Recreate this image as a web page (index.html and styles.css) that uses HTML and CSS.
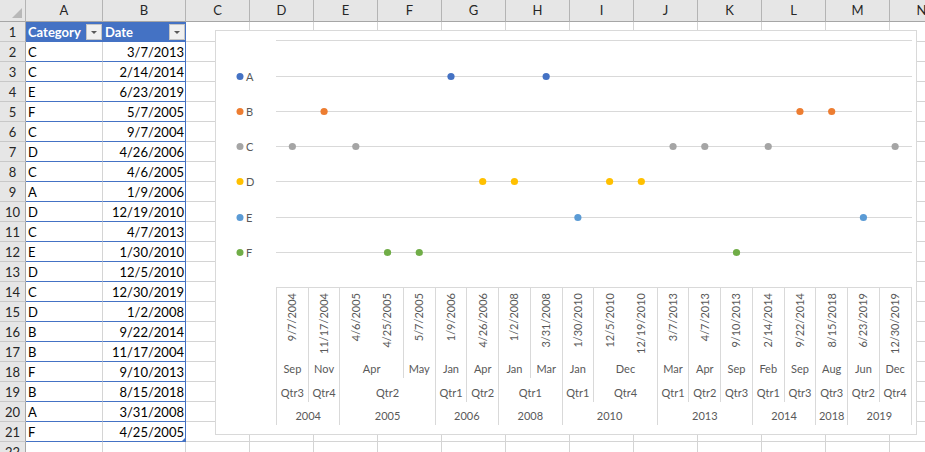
FILE: index.html
```html
<!DOCTYPE html>
<html lang="en">
<head>
    <meta charset="UTF-8">
    <meta name="viewport" content="width=device-width, initial-scale=1.0">
    <title>Timeline by Category</title>
    <link rel="stylesheet" href="styles.css">
</head>
<body>
    <div class="sheet">
        <div class="colheads">
            <div class="corner"><span class="tri"></span></div>
            <div class="col-a">A</div>
            <div class="col-b">B</div>
            <div>C</div>
            <div>D</div>
            <div>E</div>
            <div>F</div>
            <div>G</div>
            <div>H</div>
            <div>I</div>
            <div>J</div>
            <div>K</div>
            <div>L</div>
            <div>M</div>
            <div>N</div>
        </div>
        <div class="body">
            <div class="rowheads">
                <div>1</div><div>2</div><div>3</div><div>4</div><div>5</div><div>6</div>
                <div>7</div><div>8</div><div>9</div><div>10</div><div>11</div><div>12</div>
                <div>13</div><div>14</div><div>15</div><div>16</div><div>17</div><div>18</div>
                <div>19</div><div>20</div><div>21</div><div>22</div>
            </div>
            <div class="tbl">
                <div class="th">Category<span class="filter"></span></div>
                <div class="th">Date<span class="filter"></span></div>
                <div class="cat">C</div><div class="date">3/7/2013</div>
                <div class="cat">C</div><div class="date">2/14/2014</div>
                <div class="cat">E</div><div class="date">6/23/2019</div>
                <div class="cat">F</div><div class="date">5/7/2005</div>
                <div class="cat">C</div><div class="date">9/7/2004</div>
                <div class="cat">D</div><div class="date">4/26/2006</div>
                <div class="cat">C</div><div class="date">4/6/2005</div>
                <div class="cat">A</div><div class="date">1/9/2006</div>
                <div class="cat">D</div><div class="date">12/19/2010</div>
                <div class="cat">C</div><div class="date">4/7/2013</div>
                <div class="cat">E</div><div class="date">1/30/2010</div>
                <div class="cat">D</div><div class="date">12/5/2010</div>
                <div class="cat">C</div><div class="date">12/30/2019</div>
                <div class="cat">D</div><div class="date">1/2/2008</div>
                <div class="cat">B</div><div class="date">9/22/2014</div>
                <div class="cat">B</div><div class="date">11/17/2004</div>
                <div class="cat">F</div><div class="date">9/10/2013</div>
                <div class="cat">B</div><div class="date">8/15/2018</div>
                <div class="cat">A</div><div class="date">3/31/2008</div>
                <div class="cat">F</div><div class="date last">4/25/2005</div>
                <div class="blank"></div><div class="blank"></div>
            </div>
            <div class="empty"></div>
        </div>
        <div class="chart" id="chart"></div>
    </div>
    <script>
        const colors = { A: '#4472c4', B: '#ed7d31', C: '#a5a5a5', D: '#ffc000', E: '#5b9bd5', F: '#70ad47' };
        const monthNames = ['Jan', 'Feb', 'Mar', 'Apr', 'May', 'Jun', 'Jul', 'Aug', 'Sep', 'Oct', 'Nov', 'Dec'];
        const cats = ['A', 'B', 'C', 'D', 'E', 'F'];

        const catCells = document.querySelectorAll('.tbl .cat');
        const dateCells = document.querySelectorAll('.tbl .date');
        let points = [];
        catCells.forEach((cell, i) =>
        {
            const text = dateCells[i].textContent;
            const [m, d, y] = text.split('/').map(Number);
            points.push({ cat: cell.textContent, text, m, d, y, q: Math.ceil(m / 3) });
        });
        points.sort((a, b) => (a.y - b.y) || (a.m - b.m) || (a.d - b.d));

        // plot geometry, in chart pixels
        const left = 60.5, step = 31.725, axisY = 256;
        const cx = i => left + step * (i + 0.5);
        const rowY = k => Math.round(9.3 + 35.286 * k) + 0.5;
        const depthY = [0, 347, 371, 394];

        function depth(a, b)
        {
            if (!a || !b || a.y !== b.y) return 3;
            if (a.q !== b.q) return 2;
            if (a.m !== b.m) return 1;
            return 0;
        }

        function groups(keyOf)
        {
            const res = [];
            points.forEach((p, i) =>
            {
                const last = res[res.length - 1];
                if (last && last.key === keyOf(p)) last.end = i;
                else res.push({ key: keyOf(p), start: i, end: i, p });
            });
            return res;
        }

        let out = '';
        for (let k = 0; k <= 7; k++)
        {
            out += `<line class="grid" x1="60" x2="696" y1="${rowY(k)}" y2="${rowY(k)}"/>`;
        }

        for (let b = 0; b <= points.length; b++)
        {
            const dp = depth(points[b - 1], points[b]);
            if (!dp) continue;
            const x = Math.floor(276.5 + step * b) - 216 + 0.5;
            out += `<line class="grid" x1="${x}" x2="${x}" y1="${axisY}" y2="${depthY[dp]}"/>`;
        }

        cats.forEach((c, k) =>
        {
            const y = rowY(k + 1);
            out += `<circle cx="24" cy="${y}" r="3.5" fill="${colors[c]}"/>`;
            out += `<text x="30" y="${y + 4}">${c}</text>`;
        });

        points.forEach((p, i) =>
        {
            const y = rowY(cats.indexOf(p.cat) + 1);
            out += `<circle cx="${cx(i)}" cy="${y}" r="3.6" fill="${colors[p.cat]}"/>`;
            out += `<text text-anchor="end" transform="translate(${cx(i) + 3.9} 262) rotate(-90)">${p.text}</text>`;
        });

        const levels = [
            { key: p => p.y * 100 + p.m, label: p => monthNames[p.m - 1], y: 342 },
            { key: p => p.y * 10 + p.q, label: p => 'Qtr' + p.q, y: 365.5 },
            { key: p => p.y, label: p => p.y, y: 388.5 }
        ];
        levels.forEach(level =>
        {
            groups(level.key).forEach(g =>
            {
                const x = (cx(g.start) + cx(g.end)) / 2;
                out += `<text text-anchor="middle" x="${x}" y="${level.y}">${level.label(g.p)}</text>`;
            });
        });

        document.getElementById('chart').innerHTML =
            '<svg width="700" height="403" viewBox="0 0 700 403">' + out + '</svg>';
    </script>
</body>
</html>
```
FILE: styles.css
```css
html, body
{
    margin: 0;
    overflow: hidden;
}
body
{
    font-family: Lato, "Liberation Sans", sans-serif;
    font-size: 13px;
    color: #000;
    background-color: #fff;
}
.sheet
{
    position: relative;
    width: 925px;
    height: 452px;
    overflow: hidden;
}

/* column letters */
.colheads
{
    display: flex;
    height: 22px;
}
.colheads div
{
    flex: none;
    box-sizing: border-box;
    width: 64px;
    height: 22px;
    background-color: #e6e6e6;
    border-right: 1px solid #b4b4b4;
    border-bottom: 1px solid #a6a6a6;
    text-align: center;
    line-height: 21px;
    color: #262626;
}
.colheads .corner
{
    width: 26px;
    position: relative;
}
.colheads .col-a { width: 77px; }
.colheads .col-b { width: 83px; }
.tri
{
    position: absolute;
    right: 3px;
    bottom: 3px;
    width: 0;
    height: 0;
    border-left: 10px solid transparent;
    border-bottom: 10px solid #b8b8b8;
}

.body
{
    display: flex;
}

/* row numbers */
.rowheads
{
    flex: none;
    width: 26px;
}
.rowheads div
{
    box-sizing: border-box;
    height: 20px;
    background-color: #e6e6e6;
    border-right: 1px solid #a6a6a6;
    border-bottom: 1px solid #c8c8c8;
    text-align: center;
    line-height: 20px;
    color: #262626;
}

/* the data table */
.tbl
{
    flex: none;
    display: grid;
    grid-template-columns: 77px 83px;
    grid-auto-rows: 20px;
}
.tbl div
{
    box-sizing: border-box;
    border-right: 1px solid #d4d4d4;
    border-bottom: 1px solid #d4d4d4;
    line-height: 20px;
    white-space: nowrap;
    overflow: hidden;
}
.tbl .th
{
    display: flex;
    justify-content: space-between;
    align-items: flex-start;
    padding-left: 2px;
    background-color: #4472c4;
    border-color: #4472c4;
    color: #fff;
    font-weight: bold;
}
.filter
{
    position: relative;
    box-sizing: border-box;
    width: 16px;
    height: 16px;
    margin-top: 2px;
    background-color: #f0f0f0;
    border: 1px solid #c4c4c4;
}
.filter::after
{
    content: "";
    position: absolute;
    left: 4px;
    top: 6px;
    border-left: 3px solid transparent;
    border-right: 3px solid transparent;
    border-top: 3px solid #595959;
}
.tbl .cat
{
    padding-left: 2px;
    border-bottom-color: #4472c4;
}
.tbl .date
{
    text-align: right;
    padding-right: 1px;
    border-right-color: #4472c4;
    border-bottom-color: #4472c4;
}
.tbl .last
{
    position: relative;
    overflow: visible;
}
.tbl .last::after
{
    content: "";
    position: absolute;
    right: -1px;
    bottom: -1px;
    border-left: 5px solid transparent;
    border-bottom: 5px solid #4472c4;
}

/* empty cells to the right */
.empty
{
    flex: 1;
    height: 440px;
    background-image:
        linear-gradient(to right, transparent 63px, #d4d4d4 63px),
        linear-gradient(to bottom, transparent 19px, #d4d4d4 19px);
    background-size: 64px 20px;
}

/* chart */
.chart
{
    position: absolute;
    left: 215px;
    top: 30px;
    width: 702px;
    height: 405px;
    box-sizing: border-box;
    border: 1px solid #d9d9d9;
    background-color: #fff;
}
.chart svg
{
    display: block;
}
.chart text
{
    font-family: Lato, "Liberation Sans", sans-serif;
    font-size: 11px;
    fill: #595959;
}
.chart .grid
{
    stroke: #d9d9d9;
    stroke-width: 1;
}
```
